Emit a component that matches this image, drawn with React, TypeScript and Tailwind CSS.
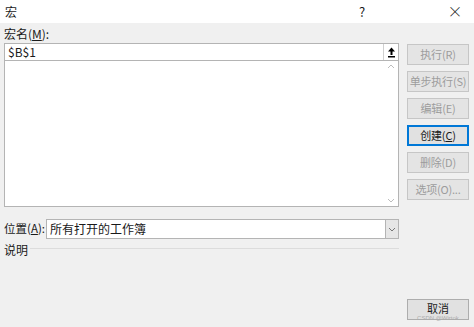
export default function App() {
  const font = { fontFamily: '"Noto Sans CJK SC", "Liberation Sans", sans-serif' };
  return (
    <div className="w-[474px] h-[327px] bg-[#f0f0f0] flex flex-col text-[12px] text-[#1a1a1a] overflow-hidden" style={font}>
      {/* Title bar */}
      <div className="h-[23px] bg-white flex items-center shrink-0">
        <span className="ml-[5px] flex-1">宏</span>
        <span className="w-[20px] text-center mr-[73px] text-[13px]">?</span>
        <span className="w-[20px] text-center mr-[9px] text-[15px] font-light">×</span>
      </div>

      <div className="flex flex-1 pl-[4px] pr-[4px]">
        {/* Left column */}
        <div className="w-[395px] flex flex-col">
          <div className="h-[20px] pt-[3px] leading-[16px] whitespace-nowrap">
            宏名(<span className="underline">M</span>):
          </div>
          <div className="h-[18px] bg-white border border-[#b4b4b4] flex items-center">
            <span className="pl-[3px] flex-1 leading-none">$B$1</span>
            <span className="w-[15px] h-full border-l border-[#d0d0d0] flex items-center justify-center">
              <svg width="9" height="11" viewBox="0 0 9 11">
                <path d="M4.5 0.5 L8 4.5 H5.5 V8 H3.5 V4.5 H1 Z" fill="#000" />
                <rect x="1" y="9" width="7" height="1.5" fill="#000" />
              </svg>
            </span>
          </div>
          <div className="h-[146px] bg-white border border-[#b4b4b4] border-t-0 flex">
            <div className="flex-1" />
            <div className="w-[14px] flex flex-col items-center justify-between py-[3px]">
              <svg width="8" height="5" viewBox="0 0 8 5"><path d="M1 4 L4 1 L7 4" fill="none" stroke="#bdbdbd" /></svg>
              <svg width="8" height="5" viewBox="0 0 8 5"><path d="M1 1 L4 4 L7 1" fill="none" stroke="#bdbdbd" /></svg>
            </div>
          </div>
          <div className="flex items-center mt-[12px] h-[20px]">
            <span className="w-[42px] whitespace-nowrap text-[11.5px]">位置(<span className="underline">A</span>):</span>
            <div className="flex-1 h-full bg-white border border-[#b4b4b4] flex items-center">
              <span className="pl-[3px] flex-1 whitespace-nowrap">所有打开的工作簿</span>
              <span className="w-[13px] h-full bg-[#e6e6e6] border-l border-[#b4b4b4] flex items-center justify-center">
                <svg width="8" height="5" viewBox="0 0 8 5"><path d="M1 1 L4 4 L7 1" fill="none" stroke="#777" /></svg>
              </span>
            </div>
          </div>
          <div className="flex items-center mt-[2px] h-[18px]">
            <span className="whitespace-nowrap">说明</span>
            <div className="flex-1 ml-[2px] mt-[-4px] border-t border-[#dcdcdc]" />
          </div>
        </div>

        {/* Right column */}
        <div className="ml-[8px] w-[62px] flex flex-col">
          <div className="h-[21px]" />
          <div className="flex flex-col gap-[6px]">
            <Btn disabled>执行(R)</Btn>
            <Btn disabled>单步执行(S)</Btn>
            <Btn disabled>编辑(E)</Btn>
            <Btn primary>创建(<span className="underline">C</span>)</Btn>
            <Btn disabled>删除(D)</Btn>
            <Btn disabled>选项(O)...</Btn>
          </div>
          <div className="mt-[99px] h-[21px] border border-[#adadad] bg-[#e1e1e1] flex flex-col items-center">
            <span className="text-[11px] leading-none mt-[3px]">取消</span>
            <span className="text-[6px] text-[#ababab] leading-none mt-[1px] whitespace-nowrap" style={{ fontFamily: '"Liberation Sans", sans-serif' }}>CSDN @Wirtok</span>
          </div>
        </div>
      </div>
    </div>
  );
}

function Btn({ children, disabled, primary }: { children: React.ReactNode; disabled?: boolean; primary?: boolean }) {
  const cls = primary
    ? "border-2 border-[#0078d7] bg-[#e1e1e1] text-[#1a1a1a]"
    : disabled
    ? "border border-[#c6c6c6] bg-[#e4e4e4] text-[#9c9c9c]"
    : "border border-[#adadad] bg-[#e1e1e1] text-[#1a1a1a]";
  return (
    <div className={`h-[21px] flex items-center justify-center leading-none text-[11px] whitespace-nowrap tracking-[-0.2px] ${cls}`}>{children}</div>
  );
}
